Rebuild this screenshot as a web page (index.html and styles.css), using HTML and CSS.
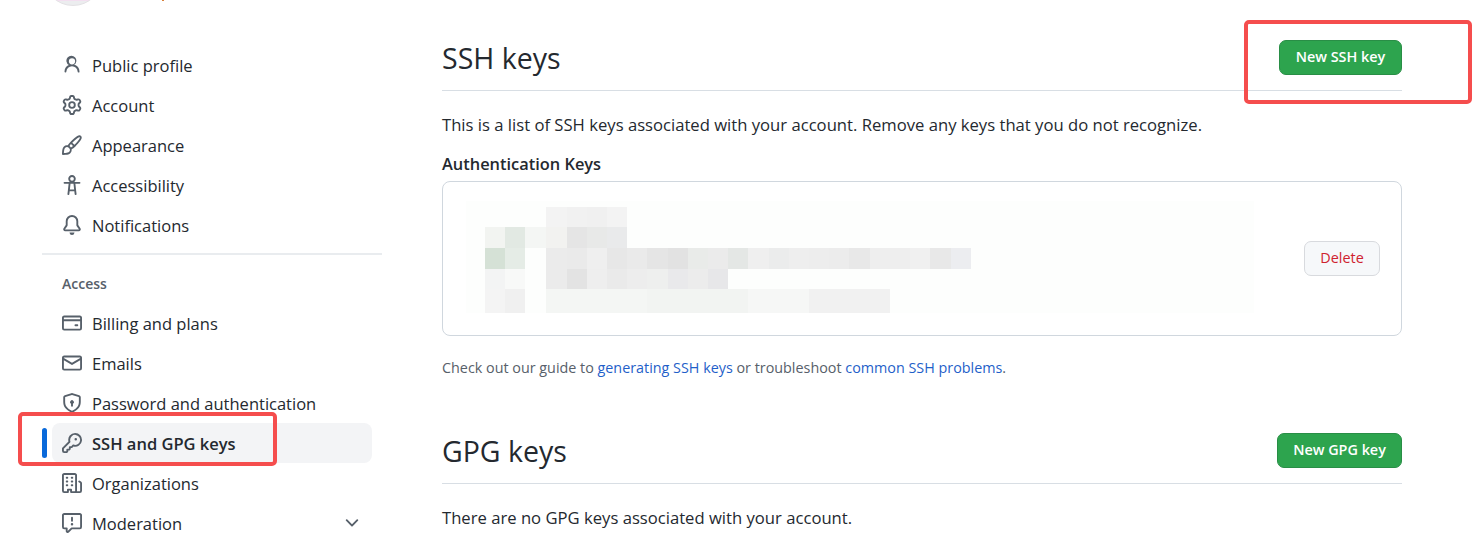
FILE: index.html
```html
<!DOCTYPE html>
<html lang="en">
<head>
<meta charset="utf-8">
<title>SSH and GPG keys</title>
<link rel="stylesheet" href="styles.css">
</head>
<body>
<div class="page">
  <aside class="sidebar">
    <div class="avatar"></div>
    <nav class="nav">
      <a class="item"><svg class="icon" viewBox="0 0 16 16"><path d="M10.561 8.073a6.005 6.005 0 0 1 3.432 5.142.75.75 0 1 1-1.498.07 4.5 4.5 0 0 0-8.99 0 .75.75 0 0 1-1.498-.07 6.004 6.004 0 0 1 3.431-5.142 3.999 3.999 0 1 1 4.123 0ZM10.5 5a2.5 2.5 0 1 0-5 0 2.5 2.5 0 0 0 5 0Z"/></svg>Public profile</a>
      <a class="item"><svg class="icon" viewBox="0 0 16 16"><path d="M8 0a8.2 8.2 0 0 1 .701.031C9.444.095 9.99.645 10.16 1.29l.288 1.107c.018.066.079.158.212.224.231.114.454.243.668.386.123.082.233.09.299.071l1.103-.303c.644-.176 1.392.021 1.82.63.27.385.506.792.704 1.218.315.675.111 1.422-.364 1.891l-.814.806c-.049.048-.098.147-.088.294.016.257.016.515 0 .772-.01.147.038.246.088.294l.814.806c.475.469.679 1.216.364 1.891a7.977 7.977 0 0 1-.704 1.217c-.428.61-1.176.807-1.82.63l-1.102-.302c-.067-.019-.177-.011-.3.071a5.909 5.909 0 0 1-.668.386c-.133.066-.194.158-.211.224l-.29 1.106c-.168.646-.715 1.196-1.458 1.26a8.006 8.006 0 0 1-1.402 0c-.743-.064-1.289-.614-1.458-1.26l-.289-1.106c-.018-.066-.079-.158-.212-.224a5.738 5.738 0 0 1-.668-.386c-.123-.082-.233-.09-.299-.071l-1.103.303c-.644.176-1.392-.021-1.82-.63a8.12 8.12 0 0 1-.704-1.218c-.315-.675-.111-1.422.363-1.891l.815-.806c.05-.048.098-.147.088-.294a6.214 6.214 0 0 1 0-.772c.01-.147-.038-.246-.088-.294l-.815-.806C.635 6.045.431 5.298.746 4.623a7.92 7.92 0 0 1 .704-1.217c.428-.61 1.176-.807 1.82-.63l1.102.302c.067.019.177.011.3-.071.214-.143.437-.272.668-.386.133-.066.194-.158.211-.224l.29-1.106C6.009.645 6.556.095 7.299.03 7.53.01 7.764 0 8 0Zm-.571 1.525c-.036.003-.108.036-.137.146l-.289 1.105c-.147.561-.549.967-.998 1.189-.173.086-.34.183-.5.29-.417.278-.97.423-1.529.27l-1.103-.303c-.109-.03-.175.016-.195.045-.22.312-.412.644-.573.99-.014.031-.021.11.059.19l.815.806c.411.406.562.957.53 1.456a4.709 4.709 0 0 0 0 .582c.032.499-.119 1.05-.53 1.456l-.815.806c-.081.08-.073.159-.059.19.162.346.353.677.573.989.02.03.085.076.195.046l1.102-.303c.56-.153 1.113-.008 1.53.27.161.107.328.204.501.29.447.222.85.629.997 1.189l.289 1.105c.029.109.101.143.137.146a6.6 6.6 0 0 0 1.142 0c.036-.003.108-.036.137-.146l.289-1.105c.147-.561.549-.967.998-1.189.173-.086.34-.183.5-.29.417-.278.97-.423 1.529-.27l1.103.303c.109.029.175-.016.195-.045.22-.313.411-.644.573-.99.014-.031.021-.11-.059-.19l-.815-.806c-.411-.406-.562-.957-.53-1.456a4.709 4.709 0 0 0 0-.582c-.032-.499.119-1.05.53-1.456l.815-.806c.081-.08.073-.159.059-.19a6.464 6.464 0 0 0-.573-.989c-.02-.03-.085-.076-.195-.046l-1.102.303c-.56.153-1.113.008-1.53-.27a4.44 4.44 0 0 0-.501-.29c-.447-.222-.85-.629-.997-1.189l-.289-1.105c-.029-.11-.101-.143-.137-.146a6.6 6.6 0 0 0-1.142 0ZM11 8a3 3 0 1 1-6 0 3 3 0 0 1 6 0ZM9.5 8a1.5 1.5 0 1 0-3.001.001A1.5 1.5 0 0 0 9.5 8Z"/></svg>Account</a>
      <a class="item"><svg class="icon" viewBox="0 0 16 16"><path d="M11.134 1.535c.7-.509 1.416-.942 2.076-1.155.649-.21 1.463-.267 2.069.34.603.601.568 1.411.368 2.07-.202.668-.624 1.39-1.125 2.096-1.011 1.424-2.496 2.987-3.775 4.249-1.098 1.084-2.132 1.839-3.04 2.3a3.744 3.744 0 0 1-1.055 3.217c-.431.431-1.065.691-1.657.861-.614.177-1.294.287-1.914.357A21.151 21.151 0 0 1 .797 16H.743l.007-.75H.749L.742 16a.75.75 0 0 1-.743-.742l.743-.008-.742.007v-.054a21.25 21.25 0 0 1 .13-2.284c.067-.647.187-1.287.358-1.914.17-.591.43-1.226.86-1.657a3.746 3.746 0 0 1 3.227-1.054c.466-.893 1.225-1.907 2.314-2.982 1.271-1.255 2.833-2.75 4.245-3.777ZM1.62 13.089c-.051.464-.086.929-.104 1.395.466-.018.932-.053 1.396-.104a10.511 10.511 0 0 0 1.668-.309c.526-.151.856-.325 1.011-.48a2.25 2.25 0 1 0-3.182-3.182c-.155.155-.329.485-.48 1.01a10.515 10.515 0 0 0-.309 1.67Zm10.396-10.34c-1.224.89-2.605 2.189-3.822 3.384l1.718 1.718c1.21-1.205 2.51-2.597 3.387-3.833.47-.662.78-1.227.912-1.662.134-.444.032-.551.009-.575h-.001V1.78c-.014-.014-.113-.113-.548.027-.432.14-.995.462-1.655.942Zm-4.832 7.266-.001.001a9.859 9.859 0 0 0 1.63-1.142L7.155 7.216a9.7 9.7 0 0 0-1.161 1.607c.482.302.889.71 1.19 1.192Z"/></svg>Appearance</a>
      <a class="item"><svg class="icon" viewBox="0 0 16 16"><path d="M9.923 5.302c.063.063.122.129.178.198H14A.75.75 0 0 1 14 7h-3.3l.578 5.163.362 2.997a.75.75 0 0 1-1.49.18L9.868 13H6.132l-.282 2.34a.75.75 0 0 1-1.49-.18l.362-2.997L5.3 7H2a.75.75 0 0 1 0-1.5h3.9a2.54 2.54 0 0 1 .176-.198 3 3 0 1 1 3.847 0ZM9.2 7H6.8l-.5 4.5h3.4ZM8 4.5a1.5 1.5 0 1 0 0-3 1.5 1.5 0 0 0 0 3Z"/></svg>Accessibility</a>
      <a class="item"><svg class="icon" viewBox="0 0 16 16"><path d="M8 16a2 2 0 0 0 1.985-1.75c.017-.137-.097-.25-.235-.25h-3.5c-.138 0-.252.113-.235.25A2 2 0 0 0 8 16ZM3 5a5 5 0 0 1 10 0v2.947c0 .05.015.098.042.139l1.703 2.555A1.519 1.519 0 0 1 13.482 13H2.518a1.516 1.516 0 0 1-1.263-2.36l1.703-2.554A.255.255 0 0 0 3 7.947Zm5-3.5A3.5 3.5 0 0 0 4.5 5v2.947c0 .346-.102.683-.294.97l-1.703 2.556a.017.017 0 0 0-.003.01l.001.006c0 .002.002.004.004.006l.006.004.007.001h10.964l.007-.001.006-.004.004-.006.001-.007a.017.017 0 0 0-.003-.01l-1.703-2.554a1.745 1.745 0 0 1-.294-.97V5A3.5 3.5 0 0 0 8 1.5Z"/></svg>Notifications</a>
      <div class="divider"></div>
      <div class="group">Access</div>
      <a class="item"><svg class="icon" viewBox="0 0 16 16"><path d="M10.75 9a.75.75 0 0 0 0 1.5h1.5a.75.75 0 0 0 0-1.5h-1.5Z M0 3.75C0 2.784.784 2 1.75 2h12.5c.966 0 1.75.784 1.75 1.75v8.5A1.75 1.75 0 0 1 14.25 14H1.75A1.75 1.75 0 0 1 0 12.25ZM14.5 6.5h-13v5.75c0 .138.112.25.25.25h12.5a.25.25 0 0 0 .25-.25Zm0-2.75a.25.25 0 0 0-.25-.25H1.75a.25.25 0 0 0-.25.25V5h13Z"/></svg>Billing and plans</a>
      <a class="item"><svg class="icon" viewBox="0 0 16 16"><path d="M1.75 2h12.5c.966 0 1.75.784 1.75 1.75v8.5A1.75 1.75 0 0 1 14.25 14H1.75A1.75 1.75 0 0 1 0 12.25v-8.5C0 2.784.784 2 1.75 2ZM1.5 12.251c0 .138.112.25.25.25h12.5a.25.25 0 0 0 .25-.25V5.809L8.38 9.397a.75.75 0 0 1-.76 0L1.5 5.809v6.442Zm13-8.181v-.32a.25.25 0 0 0-.25-.25H1.75a.25.25 0 0 0-.25.25v.32L8 7.88Z"/></svg>Emails</a>
      <a class="item"><svg class="icon" viewBox="0 0 16 16"><path d="M7.467.133a1.748 1.748 0 0 1 1.066 0l5.25 1.68A1.75 1.75 0 0 1 15 3.48V7c0 1.566-.32 3.182-1.303 4.682-.983 1.498-2.585 2.813-5.032 3.855a1.697 1.697 0 0 1-1.33 0c-2.447-1.042-4.049-2.357-5.032-3.855C1.32 10.182 1 8.566 1 7V3.48a1.75 1.75 0 0 1 1.217-1.667Zm.61 1.429a.25.25 0 0 0-.153 0l-5.25 1.68a.25.25 0 0 0-.174.238V7c0 1.358.275 2.666 1.057 3.86.784 1.194 2.121 2.34 4.366 3.297a.196.196 0 0 0 .154 0c2.245-.956 3.582-2.104 4.366-3.298C13.225 9.666 13.5 8.36 13.5 7V3.48a.251.251 0 0 0-.174-.237l-5.25-1.68ZM8.75 8.582v1.668a.75.75 0 0 1-1.5 0V8.582a1.5 1.5 0 1 1 1.5 0Z"/></svg>Password and authentication</a>
      <a class="item current"><svg class="icon" viewBox="0 0 16 16"><path d="M10.5 0a5.499 5.499 0 1 1-1.288 10.848l-.932.932a.749.749 0 0 1-.53.22H7v.75a.749.749 0 0 1-.22.53l-.5.5a.749.749 0 0 1-.53.22H5v.75a.749.749 0 0 1-.22.53l-.5.5a.749.749 0 0 1-.53.22h-2A1.75 1.75 0 0 1 0 14.25v-2c0-.199.079-.389.22-.53l4.932-4.932A5.5 5.5 0 0 1 10.5 0Zm-4 5.5c-.001.431.069.86.205 1.269a.75.75 0 0 1-.181.768L1.5 12.56v1.69c0 .138.112.25.25.25h1.69l.06-.06v-1.19a.75.75 0 0 1 .75-.75h1.19l.06-.06v-1.19a.75.75 0 0 1 .75-.75h1.19l1.023-1.025a.75.75 0 0 1 .768-.18A4 4 0 1 0 6.5 5.5ZM11 6a1 1 0 1 1 0-2 1 1 0 0 1 0 2Z"/></svg>SSH and GPG keys</a>
      <a class="item"><svg class="icon" viewBox="0 0 16 16"><path d="M1.75 16A1.75 1.75 0 0 1 0 14.25V1.75C0 .784.784 0 1.75 0h8.5C11.216 0 12 .784 12 1.75v12.5c0 .085-.006.168-.018.25h2.268a.25.25 0 0 0 .25-.25V8.285a.25.25 0 0 0-.111-.208l-1.055-.703a.749.749 0 1 1 .832-1.248l1.055.703c.487.325.779.871.779 1.456v5.965A1.75 1.75 0 0 1 14.25 16h-3.5a.766.766 0 0 1-.197-.026c-.099.017-.2.026-.303.026h-3a.75.75 0 0 1-.75-.75V14h-1v1.25a.75.75 0 0 1-.75.75Zm-.25-1.75c0 .138.112.25.25.25H4v-1.25a.75.75 0 0 1 .75-.75h2.5a.75.75 0 0 1 .75.75v1.25h2.25a.25.25 0 0 0 .25-.25V1.75a.25.25 0 0 0-.25-.25h-8.5a.25.25 0 0 0-.25.25ZM3.75 6h.5a.75.75 0 0 1 0 1.5h-.5a.75.75 0 0 1 0-1.5ZM3 3.75A.75.75 0 0 1 3.75 3h.5a.75.75 0 0 1 0 1.5h-.5A.75.75 0 0 1 3 3.75Zm4 3A.75.75 0 0 1 7.75 6h.5a.75.75 0 0 1 0 1.5h-.5A.75.75 0 0 1 7 6.75ZM7.75 3h.5a.75.75 0 0 1 0 1.5h-.5a.75.75 0 0 1 0-1.5ZM3 9.75A.75.75 0 0 1 3.75 9h.5a.75.75 0 0 1 0 1.5h-.5A.75.75 0 0 1 3 9.75ZM7.75 9h.5a.75.75 0 0 1 0 1.5h-.5a.75.75 0 0 1 0-1.5Z"/></svg>Organizations</a>
      <a class="item"><svg class="icon" viewBox="0 0 16 16"><path d="M0 1.75C0 .784.784 0 1.75 0h12.5C15.216 0 16 .784 16 1.75v9.5A1.75 1.75 0 0 1 14.25 13H8.06l-2.573 2.573A1.458 1.458 0 0 1 3 14.543V13H1.75A1.75 1.75 0 0 1 0 11.25Zm1.75-.25a.25.25 0 0 0-.25.25v9.5c0 .138.112.25.25.25h2a.75.75 0 0 1 .75.75v2.19l2.72-2.72a.749.749 0 0 1 .53-.22h6.5a.25.25 0 0 0 .25-.25v-9.5a.25.25 0 0 0-.25-.25Zm7 2.25v2.5a.75.75 0 0 1-1.5 0v-2.5a.75.75 0 0 1 1.5 0ZM9 9a1 1 0 1 1-2 0 1 1 0 0 1 2 0Z"/></svg>Moderation<svg class="icon chevron" viewBox="0 0 16 16"><path d="M12.78 5.22a.749.749 0 0 1 0 1.06l-4.25 4.25a.749.749 0 0 1-1.06 0L3.22 6.28a.749.749 0 1 1 1.06-1.06L8 8.939l3.72-3.719a.749.749 0 0 1 1.06 0Z"/></svg></a>
    </nav>
  </aside>
  <main class="main">
    <header class="section-head first">
      <h2>SSH keys</h2>
      <a class="btn primary ssh">New SSH key</a>
    </header>
    <p class="lead">This is a list of SSH keys associated with your account. Remove any keys that you do not recognize.</p>
    <h3>Authentication Keys</h3>
    <div class="keybox">
      <svg class="blur" viewBox="0 0 788 112" shape-rendering="crispEdges">
        <rect x="0" y="0" width="788" height="112" fill="#fdfefd"/>
        <g>
          <rect x="80" y="6" width="21" height="20" fill="#f3f3f3"/><rect x="101" y="6" width="20" height="20" fill="#f1f1f1"/><rect x="121" y="6" width="20" height="20" fill="#f0f0f0"/><rect x="141" y="6" width="20" height="20" fill="#f3f3f3"/>
          <rect x="19" y="26" width="20" height="21" fill="#f2f4f1"/><rect x="39" y="26" width="20" height="21" fill="#e2e9e3"/><rect x="59" y="26" width="21" height="21" fill="#f4f6f4"/><rect x="80" y="26" width="21" height="21" fill="#f2f2f0"/><rect x="101" y="26" width="20" height="21" fill="#e5e5e5"/><rect x="121" y="26" width="20" height="21" fill="#e8e9e8"/><rect x="141" y="26" width="20" height="21" fill="#e9eaeb"/>
          <rect x="19" y="47" width="20" height="21" fill="#d5e1d6"/><rect x="39" y="47" width="20" height="21" fill="#e5ece6"/><rect x="80" y="47" width="21" height="21" fill="#ebebeb"/><rect x="101" y="47" width="20" height="21" fill="#eaeaea"/><rect x="121" y="47" width="20" height="21" fill="#efefef"/><rect x="141" y="47" width="20" height="21" fill="#e7e7e7"/><rect x="161" y="47" width="20" height="21" fill="#eaeaea"/><rect x="181" y="47" width="21" height="21" fill="#e5e5e5"/><rect x="202" y="47" width="20" height="21" fill="#e2e2e2"/><rect x="222" y="47" width="20" height="21" fill="#e9ebe9"/><rect x="242" y="47" width="20" height="21" fill="#ebebeb"/><rect x="262" y="47" width="20" height="21" fill="#e4e7e5"/><rect x="282" y="47" width="21" height="21" fill="#efefef"/><rect x="303" y="47" width="20" height="21" fill="#ebecec"/><rect x="323" y="47" width="20" height="21" fill="#eeeeee"/><rect x="343" y="47" width="20" height="21" fill="#ededed"/><rect x="363" y="47" width="20" height="21" fill="#ececec"/><rect x="383" y="47" width="21" height="21" fill="#e8e8e8"/><rect x="404" y="47" width="20" height="21" fill="#eeeeee"/><rect x="424" y="47" width="20" height="21" fill="#eeeeee"/><rect x="444" y="47" width="20" height="21" fill="#f0f0f0"/><rect x="464" y="47" width="21" height="21" fill="#e8e8e8"/><rect x="485" y="47" width="20" height="21" fill="#ecedf0"/>
          <rect x="19" y="68" width="20" height="20" fill="#f3f4f4"/><rect x="39" y="68" width="20" height="20" fill="#f8f9f8"/><rect x="80" y="68" width="21" height="20" fill="#ebebeb"/><rect x="101" y="68" width="20" height="20" fill="#e3e3e3"/><rect x="121" y="68" width="20" height="20" fill="#eeeeee"/><rect x="141" y="68" width="20" height="20" fill="#eaeaea"/><rect x="161" y="68" width="20" height="20" fill="#ededed"/><rect x="181" y="68" width="21" height="20" fill="#eeefee"/><rect x="202" y="68" width="20" height="20" fill="#e9e9eb"/><rect x="222" y="68" width="20" height="20" fill="#ececec"/><rect x="242" y="68" width="20" height="20" fill="#e7e7e9"/>
          <rect x="19" y="88" width="20" height="24" fill="#f4f4f4"/><rect x="39" y="88" width="20" height="24" fill="#f0f0f0"/><rect x="80" y="88" width="101" height="24" fill="#f4f6f4"/><rect x="181" y="88" width="101" height="24" fill="#f2f4f2"/><rect x="282" y="88" width="61" height="24" fill="#f6f7f6"/><rect x="343" y="88" width="81" height="24" fill="#f1f1f1"/>
        </g>
      </svg>
      <a class="btn danger">Delete</a>
    </div>
    <p class="help">Check out our guide to <a class="link">generating SSH keys</a> or troubleshoot <a class="link">common SSH problems</a>.</p>
    <header class="section-head second">
      <h2>GPG keys</h2>
      <a class="btn primary gpg">New GPG key</a>
    </header>
    <p class="lead">There are no GPG keys associated with your account.</p>
  </main>
</div>
<div class="mark mark-btn"></div>
<div class="mark mark-nav"></div>
</body>
</html>
```
FILE: styles.css
```css
* { box-sizing: border-box; }
html, body { margin: 0; height: 540px; overflow: hidden; background: #fff; }
body { font-family: "Open Sans", "Noto Sans", sans-serif; color: #24292f; position: relative; }
.page { display: flex; padding-left: 42px; align-items: flex-start; }
.sidebar { width: 340px; flex: none; }
.avatar { position: relative; width: 60px; height: 60px; margin: -54px 0 0 1px; border-radius: 50%; background: linear-gradient(#f3dff0 54px, #ecedef 54px); border: 1px solid #e3e1e4; }
.avatar::after { content: ""; position: absolute; left: 118px; top: 52px; width: 2px; height: 2px; background: #d9803a; }
.nav { margin-top: 39px; display: flex; flex-direction: column; }
.item { position: relative; display: flex; align-items: center; height: 40px; width: 320px; margin-left: 10px; padding-left: 10px; font-size: 16.5px; color: #24292f; border-radius: 8px; }
.icon { width: 20px; height: 20px; fill: #57606a; margin-right: 10px; flex: none; }
.chevron { margin: 0; position: absolute; right: 10px; }
.current { background: #f3f4f6; font-weight: 600; }
.current::before { content: ""; position: absolute; left: -10px; top: 5px; width: 5px; height: 30px; border-radius: 4px; background: #0969da; }
.divider { height: 2px; background: #e9ecef; margin: 8px 0 0; }
.group { font-size: 14px; font-weight: 600; color: #57606a; height: 48px; padding: 19px 0 0 20px; line-height: 20px; }
.main { width: 960px; margin-left: 60px; flex: none; }
.section-head { display: flex; align-items: center; justify-content: space-between; border-bottom: 1px solid #d8dee4; }
.first { height: 91px; padding: 40px 0 15px; }
.second { height: 84px; margin-top: 20px; padding: 33px 0 15px; }
h2 { margin: 0; font-size: 28.5px; font-weight: 400; line-height: 36px; }
h3 { margin: 15px 0 0; font-size: 16.4px; font-weight: 600; line-height: 24px; }
.lead { margin: 0; font-size: 16.65px; line-height: 24px; padding-top: 22px; }
.keybox { height: 155px; margin-top: 5px; border: 1px solid #d0d7de; border-radius: 8px; display: flex; align-items: center; padding: 0 21px 0 23px; justify-content: space-between; }
.blur { width: 788px; height: 112px; flex: none; margin-top: -3px; }
.btn { display: flex; align-items: center; justify-content: center; height: 35px; border-radius: 7px; font-size: 14.4px; padding-bottom: 2px; }
.primary { background: #2da44e; color: #fff; font-weight: 600; border: 1px solid #298e46; }
.ssh { width: 123px; }
.gpg { width: 125px; }
.danger { width: 76px; background: #f6f8fa; color: #cf222e; border: 1px solid #d8dade; }
.help { margin: 20px 0 0; font-size: 14.35px; line-height: 24px; color: #57606a; }
.link { color: #1f5fc9; }
.mark { position: absolute; border: 4px solid #f54d4d; border-radius: 5px; }
.mark-btn { left: 1244px; top: 20px; width: 228px; height: 84px; }
.mark-nav { left: 18px; top: 412px; width: 259px; height: 54px; }
```
